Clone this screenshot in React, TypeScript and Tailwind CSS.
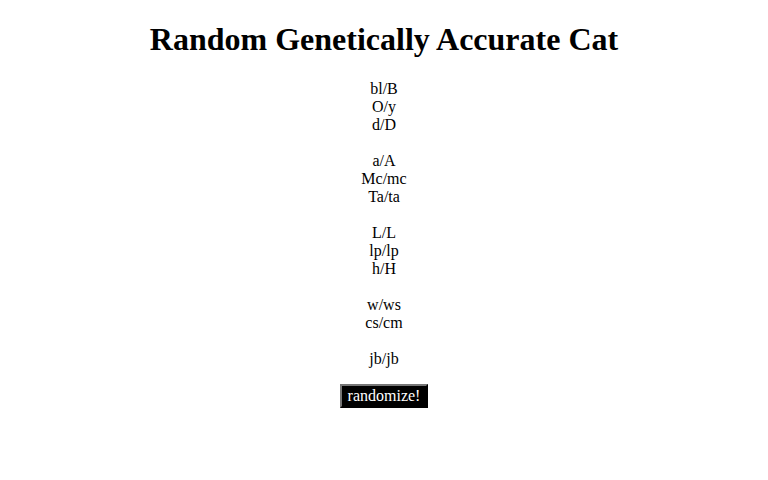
import React from 'react';

const groups: string[][] = [
  ['bl/B', 'O/y', 'd/D'],
  ['a/A', 'Mc/mc', 'Ta/ta'],
  ['L/L', 'lp/lp', 'h/H'],
  ['w/ws', 'cs/cm'],
  ['jb/jb'],
];

export default function App() {
  return (
    <div className="min-h-[480px] bg-white text-black text-center font-['Liberation_Serif',serif]">
      <h1 className="pt-[21px] text-[32px] leading-[37px] font-bold">Random Genetically Accurate Cat</h1>
      <div className="mt-[22px] text-base leading-[18px]">
        {groups.map((g, i) => (
          <div key={i} className={i > 0 ? 'mt-[18px]' : ''}>
            {g.map((line) => (
              <div key={line}>{line}</div>
            ))}
          </div>
        ))}
      </div>
      <button className="mt-[16px] bg-black text-white text-base leading-[18px] px-1.5 py-px border-2 border-t-[#767676] border-l-[#767676] border-r-black border-b-black">
        randomize!
      </button>
    </div>
  );
}
